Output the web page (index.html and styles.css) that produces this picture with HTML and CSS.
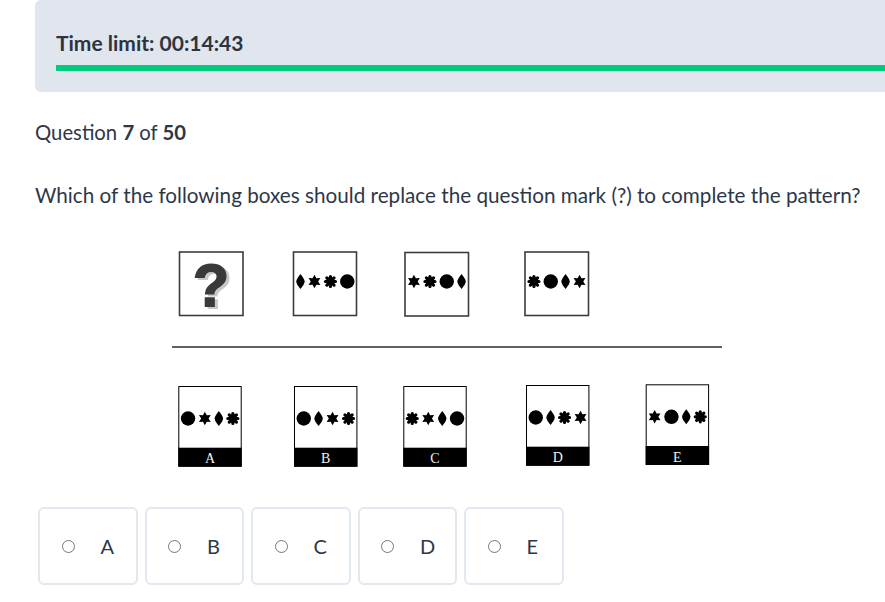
FILE: index.html
```html
<!DOCTYPE html>
<html lang="en">
<head>
<meta charset="utf-8">
<title>Question 7 of 50</title>
<link rel="stylesheet" href="styles.css">
</head>
<body>
<div class="page">
  <section class="timer">
    <div class="timer-label">Time limit: 00:14:43</div>
    <div class="timer-bar"></div>
  </section>

  <p class="q-count">Question <b>7</b> of <b>50</b></p>
  <p class="q-text">Which of the following boxes should replace the question mark (?) to complete the pattern?</p>

  <figure class="puzzle">
    <svg class="puzzle-art" width="560" height="220" viewBox="0 0 560 220">
      <defs>
        <circle id="c" r="7.2"/>
        <path id="d" d="M0,-7.5 C2.4,-4.5 4.2,-2 4.2,0 C4.2,2 2.4,4.5 0,7.5 C-2.4,4.5 -4.2,2 -4.2,0 C-4.2,-2 -2.4,-4.5 0,-7.5Z"/>
        <polygon id="s" points="0,-6.8 1.9,-3.2 5.9,-3.4 3.7,0 5.9,3.4 1.9,3.2 0,6.8 -1.9,3.2 -5.9,3.4 -3.7,0 -5.9,-3.4 -1.9,-3.2"/>
        <g id="a">
          <path class="spokes" d="M0,-5V5M-5,0H5M-3.6,-3.6L3.6,3.6M-3.6,3.6L3.6,-3.6"/>
          <circle r="3.4"/>
        </g>
      </defs>

      <!-- question row -->
      <rect class="q-box" x="9.5" y="2" width="63.5" height="63.5"/>
      <text class="qmark" x="41" y="55.5">?</text>

      <rect class="q-box" x="123.5" y="2" width="63" height="63.5"/>
      <g class="shapes">
        <use href="#d" x="130.45" y="31.5"/>
        <use href="#s" x="144.45" y="31.5"/>
        <use href="#a" x="160.45" y="31.5"/>
        <use href="#c" x="177.25" y="31.5"/>
      </g>

      <rect class="q-box" x="235" y="2.5" width="63.5" height="63.5"/>
      <g class="shapes">
        <use href="#s" x="243.95" y="31.5"/>
        <use href="#a" x="259.95" y="31.5"/>
        <use href="#c" x="276.75" y="31.5"/>
        <use href="#d" x="291.55" y="31.5"/>
      </g>

      <rect class="q-box" x="355" y="2" width="63.5" height="63.5"/>
      <g class="shapes">
        <use href="#a" x="363.95" y="31.5"/>
        <use href="#c" x="380.75" y="31.5"/>
        <use href="#d" x="395.55" y="31.5"/>
        <use href="#s" x="409.55" y="31.5"/>
      </g>

      <line class="rule" x1="2" y1="97" x2="552" y2="97"/>

      <!-- answers -->
      <rect class="ans-box" x="8.8" y="136.5" width="62.4" height="79.7"/>
      <g class="shapes">
        <use href="#c" x="18.05" y="168.5"/>
        <use href="#s" x="34.85" y="168.5"/>
        <use href="#d" x="48.85" y="168.5"/>
        <use href="#a" x="62.85" y="168.5"/>
      </g>
      <rect class="ans-label" x="8.3" y="197.7" width="63.4" height="19"/>
      <text class="ans-letter" x="40" y="213.2">A</text>

      <rect class="ans-box" x="124.5" y="136.5" width="62.4" height="79.7"/>
      <g class="shapes">
        <use href="#c" x="133.75" y="168.5"/>
        <use href="#d" x="148.55" y="168.5"/>
        <use href="#s" x="162.55" y="168.5"/>
        <use href="#a" x="178.55" y="168.5"/>
      </g>
      <rect class="ans-label" x="124" y="197.7" width="63.4" height="19"/>
      <text class="ans-letter" x="155.7" y="213.2">B</text>

      <rect class="ans-box" x="233.8" y="136.5" width="62.4" height="79.7"/>
      <g class="shapes">
        <use href="#a" x="242.25" y="168.5"/>
        <use href="#s" x="258.25" y="168.5"/>
        <use href="#d" x="272.25" y="168.5"/>
        <use href="#c" x="287.05" y="168.5"/>
      </g>
      <rect class="ans-label" x="233.3" y="197.7" width="63.4" height="19"/>
      <text class="ans-letter" x="265" y="213.2">C</text>

      <rect class="ans-box" x="356.5" y="135.5" width="62.4" height="79.7"/>
      <g class="shapes">
        <use href="#c" x="365.75" y="167.5"/>
        <use href="#d" x="380.55" y="167.5"/>
        <use href="#a" x="394.55" y="167.5"/>
        <use href="#s" x="410.55" y="167.5"/>
      </g>
      <rect class="ans-label" x="356" y="196.7" width="63.4" height="19"/>
      <text class="ans-letter" x="387.7" y="212.2">D</text>

      <rect class="ans-box" x="476.2" y="134.8" width="62.4" height="79.7"/>
      <g class="shapes">
        <use href="#s" x="484.65" y="166.8"/>
        <use href="#c" x="501.45" y="166.8"/>
        <use href="#d" x="516.25" y="166.8"/>
        <use href="#a" x="530.25" y="166.8"/>
      </g>
      <rect class="ans-label" x="475.7" y="196" width="63.4" height="19"/>
      <text class="ans-letter" x="507.4" y="211.5">E</text>
    </svg>
  </figure>

  <div class="options">
    <label class="option"><input type="radio" name="answer" value="A"><span class="opt-letter">A</span></label>
    <label class="option"><input type="radio" name="answer" value="B"><span class="opt-letter">B</span></label>
    <label class="option"><input type="radio" name="answer" value="C"><span class="opt-letter">C</span></label>
    <label class="option"><input type="radio" name="answer" value="D"><span class="opt-letter">D</span></label>
    <label class="option"><input type="radio" name="answer" value="E"><span class="opt-letter">E</span></label>
  </div>
</div>
</body>
</html>
```

FILE: styles.css
```css
html, body {
  margin: 0;
  padding: 0;
  overflow: hidden;
  background: #ffffff;
}

body {
  font-family: Lato, "Noto Sans", "Liberation Sans", sans-serif;
  color: #2d3748;
}

.page {
  padding-left: 35px;
  width: 900px;
}

.timer {
  background: #e1e5ee;
  border-radius: 6px;
  padding: 31px 0 21px 21px;
  width: 880px;
}

.timer-label {
  font-size: 21px;
  font-weight: 700;
  line-height: 24px;
  color: #2d3440;
}

.timer-bar {
  height: 6px;
  margin-top: 10px;
  background: #02cb7b;
}

.q-count {
  margin: 28px 0 0;
  font-size: 20.3px;
  line-height: 24px;
}

.q-count b {
  font-weight: 700;
}

.q-text {
  margin: 39px 0 0;
  font-size: 20.7px;
  line-height: 24px;
}

.puzzle {
  margin: 43px 0 0 135px;
  padding: 0;
}

.puzzle-art {
  display: block;
}

.q-box {
  fill: #ffffff;
  stroke: #3c3c3c;
  stroke-width: 1.6;
}

.qmark {
  font-family: "Liberation Sans", Arial, sans-serif;
  font-size: 59px;
  font-weight: 700;
  text-anchor: middle;
  fill: #3a3a3a;
  stroke: #3a3a3a;
  stroke-width: 1.8;
  filter: drop-shadow(3px 2px 0 #c8c8c8);
}

.shapes {
  fill: #000000;
}

.spokes {
  stroke: #000000;
  stroke-width: 3.2;
  stroke-linecap: round;
  fill: none;
}

.rule {
  stroke: #606060;
  stroke-width: 2;
}

.ans-box {
  fill: #ffffff;
  stroke: #000000;
  stroke-width: 1;
}

.ans-label {
  fill: #000000;
}

.ans-letter {
  fill: #f2f2f2;
  font-family: "Liberation Serif", "Times New Roman", serif;
  font-size: 14px;
  text-anchor: middle;
}

.options {
  display: flex;
  gap: 7px;
  margin: 37px 0 0 3px;
}

.option {
  box-sizing: border-box;
  width: 99.5px;
  height: 78px;
  border: 2px solid #e2e8f0;
  border-radius: 6px;
  display: flex;
  align-items: center;
  padding-left: 21.5px;
  cursor: pointer;
}

.option input {
  margin: 0;
  width: 13px;
  height: 13px;
}

.opt-letter {
  margin-left: 26px;
  font-size: 20px;
  line-height: 24px;
}
```
